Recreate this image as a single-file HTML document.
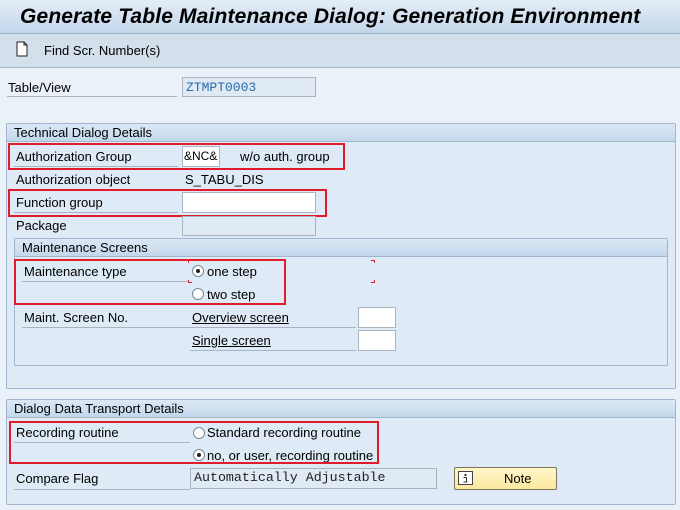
<!DOCTYPE html>
<html><head><style>
*{margin:0;padding:0;box-sizing:border-box}
body{width:680px;height:510px;overflow:hidden;background:#eaf1f8;font-family:"Liberation Sans",Tahoma,sans-serif;font-size:13px;color:#000;position:relative}
.a{position:absolute;white-space:nowrap}
.title{left:0;top:0;width:680px;height:34px;background:linear-gradient(#e4edf6,#c3d6ea);border-bottom:1px solid #9fb3c8}
.title span{position:absolute;left:20px;top:5px;font-size:21px;letter-spacing:0.15px;font-weight:bold;font-style:italic;color:#000}
.tb{left:0;top:34px;width:680px;height:34px;background:#d3dfea;border-bottom:1px solid #a5b8cb}
.box{border:1px solid #9fb6cc;background:#deeaf5;border-radius:2px}
.hdr{background:linear-gradient(#dce8f4,#c3d8ec);border-bottom:1px solid #9fb6cc}
.inp{background:#fff;border:1px solid #a9b6c2}
.ro{background:#dfeaf4;border:1px solid #a9b3bd}
.lbl{border-bottom:1px solid #a8b4c0}
.red{border:2px solid #e01c2a}
.rad{width:12px;height:12px;border:1px solid #7a8a99;border-radius:50%;background:#fff}
.dot::after{content:"";position:absolute;left:3px;top:3px;width:4px;height:4px;border-radius:50%;background:#222}
.rl{position:absolute;background:#e01c2a}
u{text-decoration:underline}
</style></head><body>
<div class="a title"><span>Generate Table Maintenance Dialog: Generation Environment</span></div>
<div class="a tb">
<svg class="a" style="left:16px;top:7px" width="12" height="16"><path d="M1 1H8L11 4V15H1Z" fill="#fff" stroke="#222"/><path d="M8 1V4H11" fill="none" stroke="#222"/></svg>
<span class="a" style="left:44px;top:9px">Find Scr. Number(s)</span></div>

<div class="a lbl" style="left:7px;top:78px;width:170px;height:19px"></div>
<span class="a" style="left:8px;top:80px">Table/View</span>
<div class="a ro" style="left:182px;top:77px;width:134px;height:20px"></div>
<span class="a" style="left:186px;top:80px;color:#2a6aa8;font-family:'Liberation Mono',monospace;font-size:13px">ZTMPT0003</span>

<div class="a box" style="left:6px;top:123px;width:670px;height:266px"></div>
<div class="a hdr" style="left:7px;top:124px;width:668px;height:18px"></div>
<span class="a" style="left:14px;top:125px">Technical Dialog Details</span>

<div class="a lbl" style="left:14px;top:148px;width:164px;height:19px"></div>
<span class="a" style="left:16px;top:149px">Authorization Group</span>
<div class="a inp" style="left:182px;top:146px;width:38px;height:21px"></div>
<span class="a" style="left:184px;top:149px;font-size:12px">&amp;NC&amp;</span>
<span class="a" style="left:240px;top:149px">w/o auth. group</span>
<div class="a red" style="left:8px;top:143px;width:337px;height:27px"></div>

<span class="a" style="left:16px;top:172px">Authorization object</span>
<span class="a" style="left:185px;top:172px">S_TABU_DIS</span>

<div class="a lbl" style="left:14px;top:194px;width:164px;height:19px"></div>
<span class="a" style="left:16px;top:195px">Function group</span>
<div class="a inp" style="left:182px;top:192px;width:134px;height:21px"></div>
<div class="a red" style="left:8px;top:189px;width:319px;height:28px"></div>

<span class="a" style="left:16px;top:218px">Package</span>
<div class="a ro" style="left:182px;top:216px;width:134px;height:20px"></div>

<div class="a box" style="left:14px;top:238px;width:654px;height:128px"></div>
<div class="a hdr" style="left:15px;top:239px;width:652px;height:18px"></div>
<span class="a" style="left:22px;top:240px">Maintenance Screens</span>

<div class="a lbl" style="left:22px;top:264px;width:166px;height:18px"></div>
<span class="a" style="left:24px;top:264px">Maintenance type</span>
<div class="a rad dot" style="left:192px;top:265px"></div>
<span class="a" style="left:207px;top:264px">one step</span>
<div class="a rad" style="left:192px;top:288px"></div>
<span class="a" style="left:207px;top:287px">two step</span>
<div class="a red" style="left:14px;top:259px;width:272px;height:46px"></div>
<div class="rl" style="left:188px;top:260px;width:1px;height:3px"></div>
<div class="rl" style="left:188px;top:280px;width:1px;height:3px"></div>
<div class="rl" style="left:188px;top:282px;width:4px;height:1px"></div>
<div class="rl" style="left:374px;top:260px;width:1px;height:3px"></div>
<div class="rl" style="left:371px;top:260px;width:4px;height:1px"></div>
<div class="rl" style="left:374px;top:280px;width:1px;height:3px"></div>
<div class="rl" style="left:371px;top:282px;width:4px;height:1px"></div>

<div class="a lbl" style="left:22px;top:310px;width:168px;height:18px"></div>
<span class="a" style="left:24px;top:310px">Maint. Screen No.</span>
<div class="a lbl" style="left:190px;top:310px;width:166px;height:18px"></div>
<span class="a" style="left:192px;top:310px"><u>Overview screen</u></span>
<div class="a inp" style="left:358px;top:307px;width:38px;height:21px"></div>
<div class="a lbl" style="left:190px;top:333px;width:166px;height:18px"></div>
<span class="a" style="left:192px;top:333px"><u>Single screen</u></span>
<div class="a inp" style="left:358px;top:330px;width:38px;height:21px"></div>

<div class="a box" style="left:6px;top:399px;width:670px;height:106px"></div>
<div class="a hdr" style="left:7px;top:400px;width:668px;height:18px"></div>
<span class="a" style="left:14px;top:401px">Dialog Data Transport Details</span>

<div class="a lbl" style="left:14px;top:426px;width:176px;height:17px"></div>
<span class="a" style="left:16px;top:425px">Recording routine</span>
<div class="a rad" style="left:193px;top:427px"></div>
<span class="a" style="left:207px;top:425px">Standard recording routine</span>
<div class="a rad dot" style="left:193px;top:449px"></div>
<span class="a" style="left:207px;top:448px">no, or user, recording routine</span>
<div class="a red" style="left:9px;top:421px;width:370px;height:43px"></div>

<div class="a lbl" style="left:14px;top:471px;width:176px;height:19px"></div>
<span class="a" style="left:16px;top:471px">Compare Flag</span>
<div class="a ro" style="left:190px;top:468px;width:247px;height:21px"></div>
<span class="a" style="left:194px;top:470px;font-family:'Liberation Mono',monospace;font-size:13.3px;color:#222">Automatically Adjustable</span>

<div class="a" style="left:454px;top:467px;width:103px;height:23px;border:1px solid #7d7560;border-radius:2px;background:linear-gradient(#fff7c8,#fbe7a0)"></div>
<svg class="a" style="left:458px;top:471px" width="16" height="15"><rect x="0.5" y="0.5" width="14" height="13" fill="#fff" stroke="#444"/><rect x="6.5" y="3" width="2" height="2" fill="#333"/><path d="M5.5 6.5H8.5V11M5.5 11H9.5" stroke="#333" fill="none"/></svg>
<span class="a" style="left:504px;top:471px">Note</span>
</body></html>
